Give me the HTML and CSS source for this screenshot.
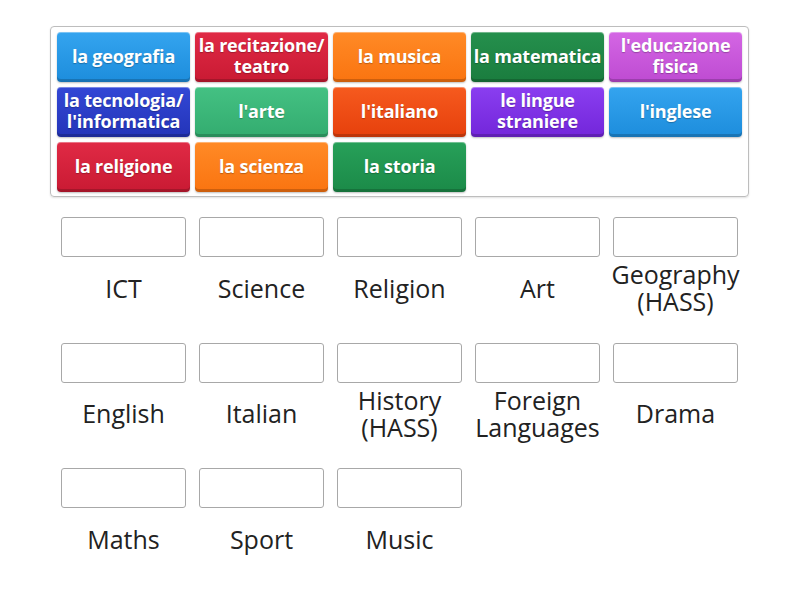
FILE: index.html
```html
<!DOCTYPE html>
<html lang="it">
<head>
<meta charset="utf-8">
<title>Match up</title>
<link rel="stylesheet" href="styles.css">
</head>
<body>
<div class="bank">
  <div class="tile c-blue">la geografia</div>
  <div class="tile c-red">la recitazione/<br>teatro</div>
  <div class="tile c-orange">la musica</div>
  <div class="tile c-dgreen">la matematica</div>
  <div class="tile c-magenta">l'educazione<br>fisica</div>
  <div class="tile c-navy">la tecnologia/<br>l'informatica</div>
  <div class="tile c-green">l'arte</div>
  <div class="tile c-redorange">l'italiano</div>
  <div class="tile c-violet">le lingue<br>straniere</div>
  <div class="tile c-blue">l'inglese</div>
  <div class="tile c-red">la religione</div>
  <div class="tile c-orange">la scienza</div>
  <div class="tile c-mgreen">la storia</div>
</div>
<div class="targets">
  <div class="cell"><div class="drop"></div><div class="label">ICT</div></div>
  <div class="cell"><div class="drop"></div><div class="label">Science</div></div>
  <div class="cell"><div class="drop"></div><div class="label">Religion</div></div>
  <div class="cell"><div class="drop"></div><div class="label">Art</div></div>
  <div class="cell"><div class="drop"></div><div class="label">Geography<br>(HASS)</div></div>
  <div class="cell"><div class="drop"></div><div class="label">English</div></div>
  <div class="cell"><div class="drop"></div><div class="label">Italian</div></div>
  <div class="cell"><div class="drop"></div><div class="label">History<br>(HASS)</div></div>
  <div class="cell"><div class="drop"></div><div class="label">Foreign<br>Languages</div></div>
  <div class="cell"><div class="drop"></div><div class="label">Drama</div></div>
  <div class="cell"><div class="drop"></div><div class="label">Maths</div></div>
  <div class="cell"><div class="drop"></div><div class="label">Sport</div></div>
  <div class="cell"><div class="drop"></div><div class="label">Music</div></div>
</div>
</body>
</html>
```
FILE: styles.css
```css
html, body {
  margin: 0;
  padding: 0;
  background: #ffffff;
}
body {
  font-family: "Open Sans", "Noto Sans", "DejaVu Sans", sans-serif;
  width: 800px;
  height: 600px;
  overflow: hidden;
}
.bank {
  margin: 26px 0 0 50px;
  width: 685px;
  padding: 5px 6px 4px 6px;
  border: 1px solid #bdbdbd;
  border-radius: 4px;
  box-shadow: 0 1px 2px rgba(0,0,0,0.12);
  display: grid;
  grid-template-columns: repeat(5, 133px);
  grid-auto-rows: 50px;
  gap: 5px;
}
.tile {
  border-radius: 4px;
  color: #ffffff;
  font-weight: 700;
  font-size: 18px;
  line-height: 21px;
  padding-bottom: 2px;
  text-align: center;
  display: flex;
  align-items: center;
  justify-content: center;
  text-shadow: 0 1px 1px rgba(0,0,0,0.25);
  box-shadow: inset 0 1px 0 rgba(255,255,255,0.35), inset 0 -3px 0 rgba(0,0,0,0.18), 0 1px 2px rgba(0,0,0,0.25);
  letter-spacing: -0.2px;
}
.c-blue { background: linear-gradient(#34a4ef, #1d8ddc); }
.c-red { background: linear-gradient(#e02a45, #c91a33); }
.c-orange { background: linear-gradient(#ff8a26, #fa7410); }
.c-dgreen { background: linear-gradient(#25904d, #1a7c3e); }
.c-mgreen { background: linear-gradient(#27a059, #1b8a48); }
.c-magenta { background: linear-gradient(#d466e4, #be4bd2); }
.c-navy { background: linear-gradient(#3348d6, #2334b8); }
.c-green { background: linear-gradient(#44c183, #33ac6f); }
.c-redorange { background: linear-gradient(#f65a1e, #e6400c); }
.c-violet { background: linear-gradient(#8a3ef0, #7326da); }
.targets {
  margin: 20px 0 0 61px;
  display: grid;
  grid-template-columns: repeat(5, 125px);
  column-gap: 13px;
  row-gap: 23.5px;
}
.cell {
  display: flex;
  flex-direction: column;
  align-items: center;
}
.drop {
  width: 123px;
  height: 38px;
  border: 1px solid #a8a8a8;
  border-radius: 3px;
  background: #ffffff;
}
.label {
  height: 62px;
  width: 140px;
  display: flex;
  align-items: center;
  justify-content: center;
  text-align: center;
  font-size: 25px;
  line-height: 27px;
  color: #222222;
}
```
